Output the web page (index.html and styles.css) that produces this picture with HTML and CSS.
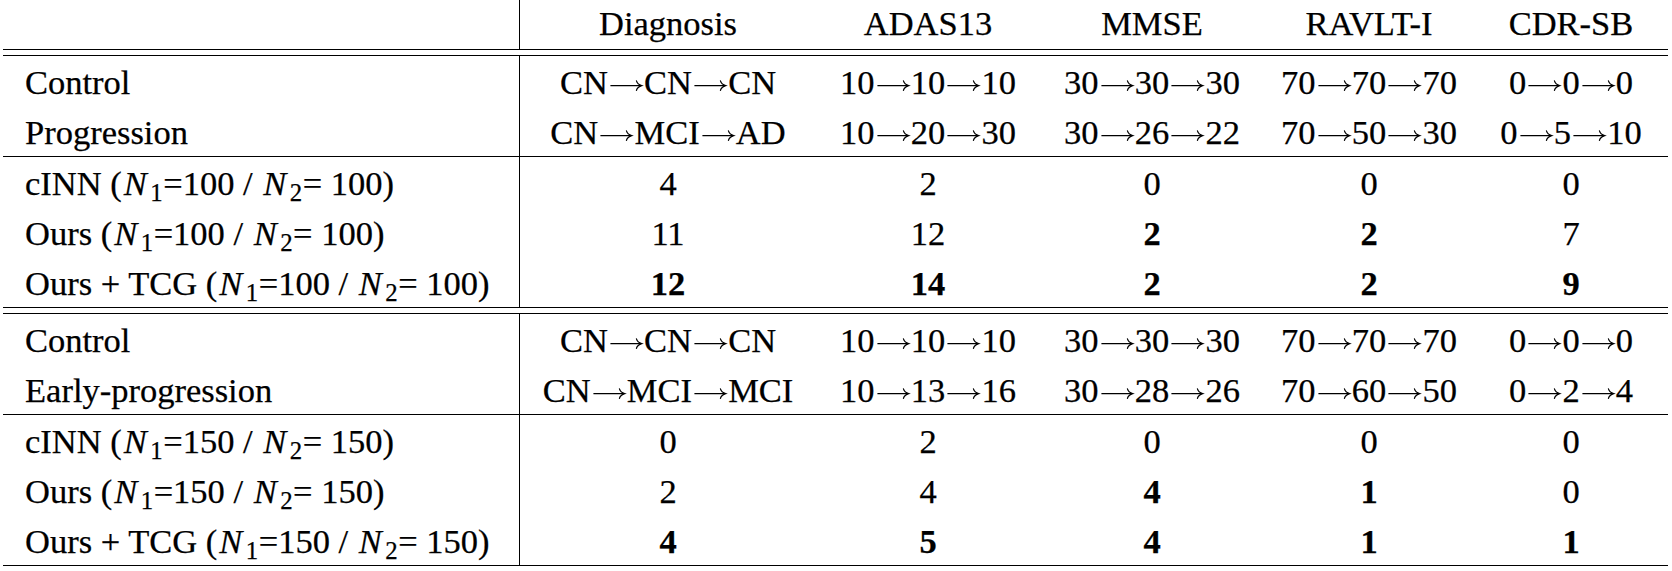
FILE: index.html
```html
<!DOCTYPE html>
<html>
<head>
<meta charset="utf-8">
<link rel="stylesheet" href="styles.css">
</head>
<body>
<svg class="defs" width="0" height="0" aria-hidden="true">
  <symbol id="ar" viewBox="0 0 1050 500">
    <path d="M70 250 H960" stroke="#000" stroke-width="40" fill="none"/>
    <path d="M825 114 Q855 215 975 250 Q855 285 825 386" stroke="#000" stroke-width="36" fill="none" stroke-linecap="round"/>
  </symbol>
</svg>
<div class="tbl">
  <div class="row head">
    <div class="c0"></div>
    <div>Diagnosis</div><div>ADAS13</div><div>MMSE</div><div>RAVLT-I</div><div>CDR-SB</div>
  </div>
  <div class="dbl"></div>
  <div class="row">
    <div class="c0">Control</div>
    <div>CN<svg class="ar"><use href="#ar"/></svg>CN<svg class="ar"><use href="#ar"/></svg>CN</div>
    <div>10<svg class="ar"><use href="#ar"/></svg>10<svg class="ar"><use href="#ar"/></svg>10</div>
    <div>30<svg class="ar"><use href="#ar"/></svg>30<svg class="ar"><use href="#ar"/></svg>30</div>
    <div>70<svg class="ar"><use href="#ar"/></svg>70<svg class="ar"><use href="#ar"/></svg>70</div>
    <div>0<svg class="ar"><use href="#ar"/></svg>0<svg class="ar"><use href="#ar"/></svg>0</div>
  </div>
  <div class="row ruled">
    <div class="c0">Progression</div>
    <div>CN<svg class="ar"><use href="#ar"/></svg>MCI<svg class="ar"><use href="#ar"/></svg>AD</div>
    <div>10<svg class="ar"><use href="#ar"/></svg>20<svg class="ar"><use href="#ar"/></svg>30</div>
    <div>30<svg class="ar"><use href="#ar"/></svg>26<svg class="ar"><use href="#ar"/></svg>22</div>
    <div>70<svg class="ar"><use href="#ar"/></svg>50<svg class="ar"><use href="#ar"/></svg>30</div>
    <div>0<svg class="ar"><use href="#ar"/></svg>5<svg class="ar"><use href="#ar"/></svg>10</div>
  </div>
  <div class="row">
    <div class="c0">cINN (<i>N</i><sub>1</sub>=100 / <i>N</i><sub>2</sub>= 100)</div>
    <div>4</div><div>2</div><div>0</div><div>0</div><div>0</div>
  </div>
  <div class="row">
    <div class="c0">Ours (<i>N</i><sub>1</sub>=100 / <i>N</i><sub>2</sub>= 100)</div>
    <div>11</div><div>12</div><div><b>2</b></div><div><b>2</b></div><div>7</div>
  </div>
  <div class="row">
    <div class="c0">Ours + TCG (<i>N</i><sub>1</sub>=100 / <i>N</i><sub>2</sub>= 100)</div>
    <div><b>12</b></div><div><b>14</b></div><div><b>2</b></div><div><b>2</b></div><div><b>9</b></div>
  </div>
  <div class="dbl"></div>
  <div class="row">
    <div class="c0">Control</div>
    <div>CN<svg class="ar"><use href="#ar"/></svg>CN<svg class="ar"><use href="#ar"/></svg>CN</div>
    <div>10<svg class="ar"><use href="#ar"/></svg>10<svg class="ar"><use href="#ar"/></svg>10</div>
    <div>30<svg class="ar"><use href="#ar"/></svg>30<svg class="ar"><use href="#ar"/></svg>30</div>
    <div>70<svg class="ar"><use href="#ar"/></svg>70<svg class="ar"><use href="#ar"/></svg>70</div>
    <div>0<svg class="ar"><use href="#ar"/></svg>0<svg class="ar"><use href="#ar"/></svg>0</div>
  </div>
  <div class="row ruled">
    <div class="c0">Early-progression</div>
    <div>CN<svg class="ar"><use href="#ar"/></svg>MCI<svg class="ar"><use href="#ar"/></svg>MCI</div>
    <div>10<svg class="ar"><use href="#ar"/></svg>13<svg class="ar"><use href="#ar"/></svg>16</div>
    <div>30<svg class="ar"><use href="#ar"/></svg>28<svg class="ar"><use href="#ar"/></svg>26</div>
    <div>70<svg class="ar"><use href="#ar"/></svg>60<svg class="ar"><use href="#ar"/></svg>50</div>
    <div>0<svg class="ar"><use href="#ar"/></svg>2<svg class="ar"><use href="#ar"/></svg>4</div>
  </div>
  <div class="row">
    <div class="c0">cINN (<i>N</i><sub>1</sub>=150 / <i>N</i><sub>2</sub>= 150)</div>
    <div>0</div><div>2</div><div>0</div><div>0</div><div>0</div>
  </div>
  <div class="row">
    <div class="c0">Ours (<i>N</i><sub>1</sub>=150 / <i>N</i><sub>2</sub>= 150)</div>
    <div>2</div><div>4</div><div><b>4</b></div><div><b>1</b></div><div>0</div>
  </div>
  <div class="row ruled">
    <div class="c0">Ours + TCG (<i>N</i><sub>1</sub>=150 / <i>N</i><sub>2</sub>= 150)</div>
    <div><b>4</b></div><div><b>5</b></div><div><b>4</b></div><div><b>1</b></div><div><b>1</b></div>
  </div>
</div>
</body>
</html>
```
FILE: styles.css
```css
html, body {
  margin: 0;
  padding: 0;
  background: #fff;
}
body {
  font-family: "Liberation Serif", "Times New Roman", serif;
  font-size: 34.5px;
  color: #000;
  -webkit-text-stroke: 0.25px #000;
}
.defs {
  position: absolute;
  width: 0;
  height: 0;
  overflow: hidden;
}
.tbl {
  margin-left: 3px;
  width: 1665px;
}
.row {
  display: grid;
  grid-template-columns: 517px 296px 224px 224px 210px 194px;
  height: 50px;
}
.row > div {
  display: block;
  text-align: center;
  white-space: nowrap;
  line-height: 47px;
  padding-top: 3px;
}
.row > .c0 {
  text-align: left;
  padding-left: 22px;
  border-right: 1px solid #000;
}
.head {
  border-bottom: 1px solid #000;
  box-sizing: border-box;
}
.head > div {
  padding-top: 0;
  line-height: 47px;
}
.ruled {
  border-bottom: 1px solid #000;
}
.dbl {
  height: 5px;
  border-bottom: 1px solid #000;
}
.row + .dbl {
  border-top: 1px solid #000;
}
.head + .dbl {
  border-top: none;
}
.ar {
  width: 1.05em;
  height: 0.5em;
  vertical-align: 0;
}
i {
  font-style: italic;
  padding: 0 0.1em 0 0.06em;
}
sub {
  font-size: 0.72em;
  vertical-align: -0.24em;
  line-height: 0;
  margin-right: 0.02em;
}
b {
  font-weight: bold;
}
```
